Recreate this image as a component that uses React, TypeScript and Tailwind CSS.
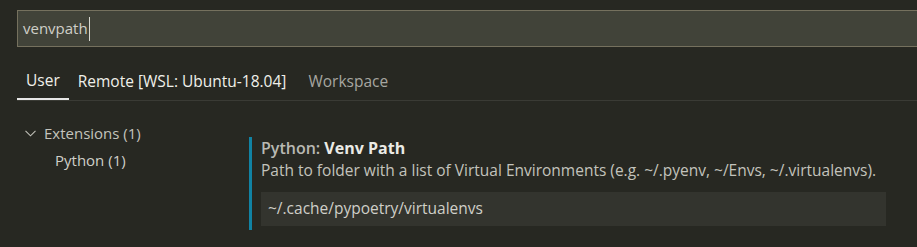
export default function App() {
  return (
    <div
      className="w-[917px] h-[247px] overflow-hidden bg-[#272822] text-[#c9c9c2]"
      style={{ fontFamily: '"Open Sans", "Noto Sans", sans-serif' }}
    >
      {/* search box */}
      <div className="pt-[10px] pl-[17px]">
        <div className="w-[920px] h-[37px] border border-[#75715e] bg-[#414339] flex items-center pl-[5px]">
          <span className="text-[15px] text-[#cfcfc8] leading-none">venvpath</span>
          <span className="w-px h-[24px] bg-[#d8d8d0] ml-[1px]" />
        </div>
      </div>

      {/* tabs */}
      <div className="ml-[17px] h-[54px] flex items-end border-b border-[#3a3b35]">
        <div className="h-[37px] px-[9px] flex items-center border-b-2 border-[#e6e6e6] text-[15.5px] text-[#f0f0ea]">
          User
        </div>
        <div className="h-[37px] px-[9px] flex items-center text-[15.5px] text-[#f0f0ea]">
          Remote [WSL: Ubuntu-18.04]
        </div>
        <div className="h-[37px] ml-[4px] px-[9px] flex items-center text-[15.5px] text-[#a6a6a0]">
          Workspace
        </div>
      </div>

      <div className="flex">
        {/* tree */}
        <div className="w-[249px] pt-[19px] text-[15px]">
          <div className="h-[27px] flex items-center pl-[25px]">
            <svg width="11" height="7" viewBox="0 0 11 7" className="mr-[8px]">
              <path d="M0.5 0.8 L5.5 5.8 L10.5 0.8" fill="none" stroke="#c0c0b8" strokeWidth="1.1" />
            </svg>
            <span className="text-[#c3c3bc]">Extensions (1)</span>
          </div>
          <div className="h-[27px] flex items-center pl-[55px] text-[#cfcfc8]">Python (1)</div>
        </div>

        {/* setting item */}
        <div className="mt-[36px] h-[93px] border-l-[3px] border-[#1183a4] pl-[9px] flex flex-col">
          <div className="h-[21px] flex items-center text-[16px] font-semibold text-[#b9b9b2]">
            Python:&nbsp;<span className="font-bold text-[#ebebe6]">Venv Path</span>
          </div>
          <div className="h-[25px] flex items-center text-[15.5px] text-[#c3c3bc]">
            Path to folder with a list of Virtual Environments (e.g. ~/.pyenv, ~/Envs, ~/.virtualenvs).
          </div>
          <div className="mt-[9px] w-[625px] h-[34px] bg-[#33342e] flex items-center pl-[7px] text-[15.5px] text-[#cfcfc8]">
            ~/.cache/pypoetry/virtualenvs
          </div>
        </div>
      </div>
    </div>
  );
}
